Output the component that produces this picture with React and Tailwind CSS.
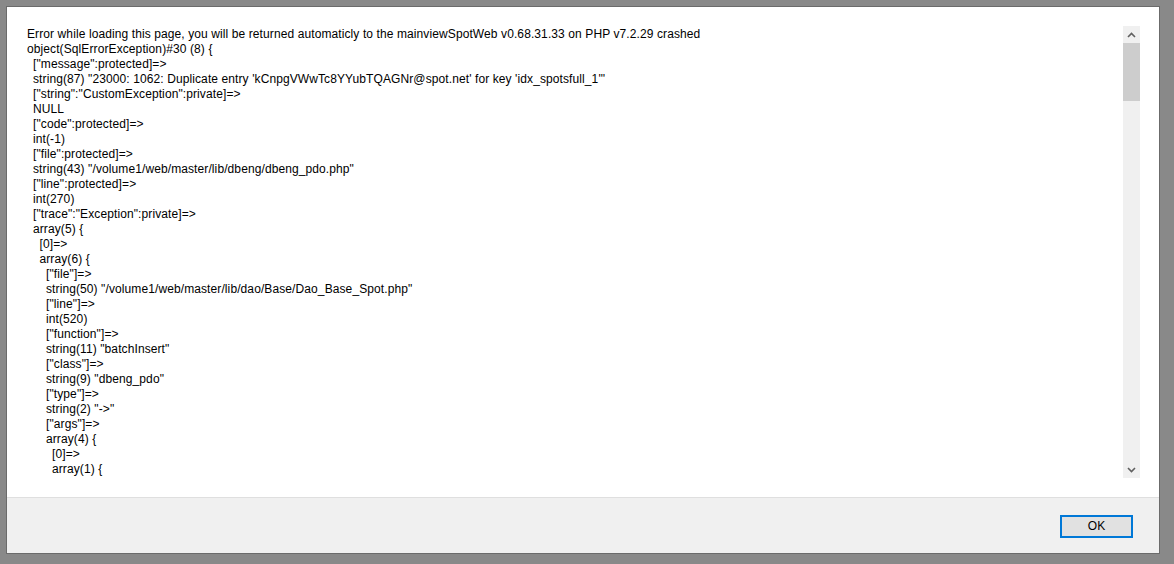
const INDENT = ["pl-0", "pl-[6px]", "pl-[12.5px]", "pl-[19px]", "pl-[25px]"];

const LINES = [
  [0, "Error while loading this page, you will be returned automaticly to the mainviewSpotWeb v0.68.31.33 on PHP v7.2.29 crashed"],
  [0, "object(SqlErrorException)#30 (8) {"],
  [1, "[\"message\":protected]=>"],
  [1, "string(87) \"23000: 1062: Duplicate entry 'kCnpgVWwTc8YYubTQAGNr@spot.net' for key 'idx_spotsfull_1'\""],
  [1, "[\"string\":\"CustomException\":private]=>"],
  [1, "NULL"],
  [1, "[\"code\":protected]=>"],
  [1, "int(-1)"],
  [1, "[\"file\":protected]=>"],
  [1, "string(43) \"/volume1/web/master/lib/dbeng/dbeng_pdo.php\""],
  [1, "[\"line\":protected]=>"],
  [1, "int(270)"],
  [1, "[\"trace\":\"Exception\":private]=>"],
  [1, "array(5) {"],
  [2, "[0]=>"],
  [2, "array(6) {"],
  [3, "[\"file\"]=>"],
  [3, "string(50) \"/volume1/web/master/lib/dao/Base/Dao_Base_Spot.php\""],
  [3, "[\"line\"]=>"],
  [3, "int(520)"],
  [3, "[\"function\"]=>"],
  [3, "string(11) \"batchInsert\""],
  [3, "[\"class\"]=>"],
  [3, "string(9) \"dbeng_pdo\""],
  [3, "[\"type\"]=>"],
  [3, "string(2) \"->\""],
  [3, "[\"args\"]=>"],
  [3, "array(4) {"],
  [4, "[0]=>"],
  [4, "array(1) {"],
];

function Arrow({ up }) {
  return (
    <div className="h-[17px] flex items-center justify-center">
      <svg width="9" height="6" viewBox="0 0 9 6">
        <path
          d={up ? "M1 5 L4.5 1.5 L8 5" : "M1 1 L4.5 4.5 L8 1"}
          fill="none"
          stroke="#606060"
          strokeWidth="1.6"
        />
      </svg>
    </div>
  );
}

export default function App() {
  return (
    <div className="w-[1174px] h-[564px] bg-[#898989] pt-[6px] pl-[6px] font-['Liberation_Sans',Arial,sans-serif]">
      <div className="w-[1154px] h-[548px] border border-[#6b6b6b] bg-white flex flex-col">
        <div className="flex-1 min-h-0 pt-[19px] pb-[19px] pl-[20px] pr-[19px] flex">
          <div className="flex-1 min-w-0 overflow-hidden whitespace-pre text-[12px] leading-[15px] tracking-[0.1px] text-black pt-[1px]">
            {LINES.map(([lvl, text], i) => (
              <div key={i} className={INDENT[lvl]}>{text}</div>
            ))}
          </div>
          <div className="w-[17px] bg-[#f0f0f0] flex flex-col">
            <Arrow up />
            <div className="h-[58px] bg-[#cdcdcd]" />
            <div className="flex-1" />
            <Arrow />
          </div>
        </div>
        <div className="h-[56px] bg-[#f0f0f0] border-t border-[#dfdfdf] flex items-center justify-end pr-[26px]">
          <button className="w-[73px] h-[23px] border-2 border-[#0078d7] bg-[#e1e1e1] text-[12px] text-black font-['Liberation_Sans',Arial,sans-serif] mt-[1px]">
            OK
          </button>
        </div>
      </div>
    </div>
  );
}
